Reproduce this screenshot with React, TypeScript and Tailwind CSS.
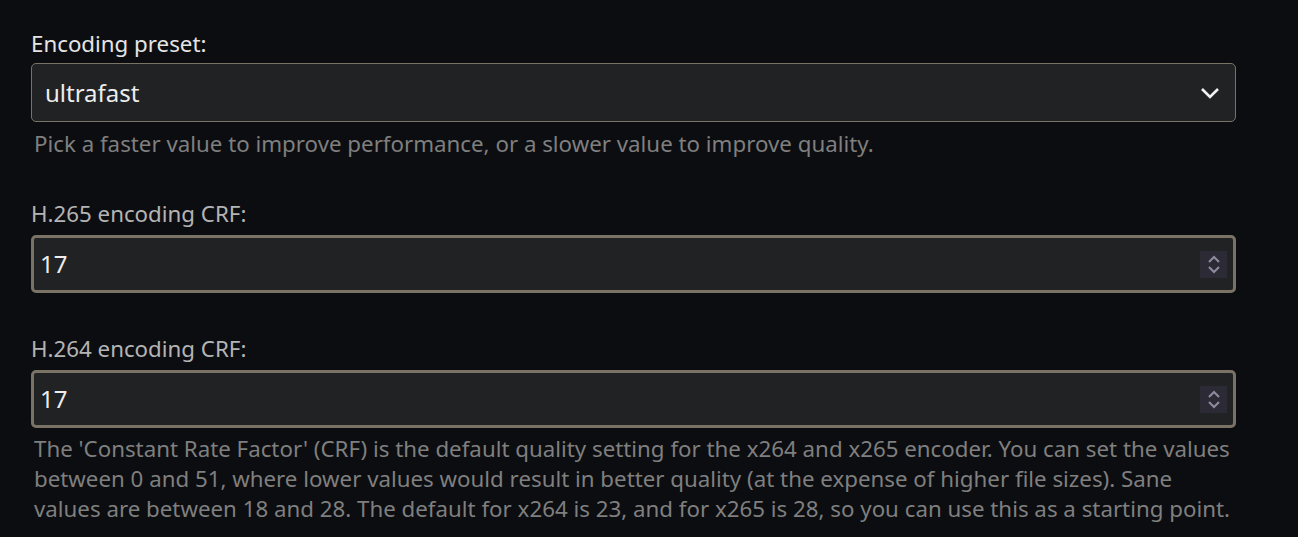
const font = { fontFamily: '"Noto Sans", "Open Sans", sans-serif' };

function Spinner() {
  return (
    <div className="flex h-[27px] w-[27px] flex-col items-center justify-center gap-[3px] bg-[#2b2a35]">
      <svg width="14" height="8" viewBox="0 0 14 8" fill="none">
        <path d="M2 7 L7 2 L12 7" stroke="#8f8ba0" strokeWidth="2" />
      </svg>
      <svg width="14" height="8" viewBox="0 0 14 8" fill="none">
        <path d="M2 1 L7 6 L12 1" stroke="#8f8ba0" strokeWidth="2" />
      </svg>
    </div>
  );
}

function NumberField({ label, value }: { label: string; value: string }) {
  return (
    <div>
      <div className="text-[22.3px] leading-[30px] text-[#b4b4b4]">{label}</div>
      <div className="mt-[6px] flex h-[58px] w-[1205px] items-center justify-between rounded-[5px] border-[3px] border-[#7b7266] bg-[#212224] pl-[6px] pr-[6px]">
        <span className="text-[24px] text-[#ededed]">{value}</span>
        <Spinner />
      </div>
    </div>
  );
}

export default function App() {
  return (
    <div className="min-h-[537px] w-full bg-[#0c0d10] pl-[31px] pt-[29px]" style={font}>
      {/* Encoding preset */}
      <div>
        <div className="text-[22.3px] leading-[30px] text-[#e4e4e4]">Encoding preset:</div>
        <div className="mt-[4px] flex h-[59px] w-[1205px] items-center justify-between rounded-[5px] border border-[#7b7266] bg-[#212224] pl-[13px] pr-[15px]">
          <span className="text-[24px] text-[#ededed]">ultrafast</span>
          <svg width="20" height="12" viewBox="0 0 20 12" fill="none">
            <path d="M2 2 L10 10 L18 2" stroke="#f2f2f2" strokeWidth="2.6" />
          </svg>
        </div>
        <p className="mt-[7px] pl-[3px] text-[22.3px] leading-[30px] text-[#7f7f7f]">
          Pick a faster value to improve performance, or a slower value to improve quality.
        </p>
      </div>

      <div className="mt-[40px]">
        <NumberField label="H.265 encoding CRF:" value="17" />
      </div>

      <div className="mt-[41px]">
        <NumberField label="H.264 encoding CRF:" value="17" />
        <p className="mt-[6px] w-[1205px] pl-[3px] text-[22.3px] leading-[30px] text-[#7f7f7f]">
          The 'Constant Rate Factor' (CRF) is the default quality setting for the x264 and x265 encoder. You can set the values between 0 and 51, where lower values would result in better quality (at the expense of higher file sizes). Sane values are between 18 and 28. The default for x264 is 23, and for x265 is 28, so you can use this as a starting point.
        </p>
      </div>
    </div>
  );
}
